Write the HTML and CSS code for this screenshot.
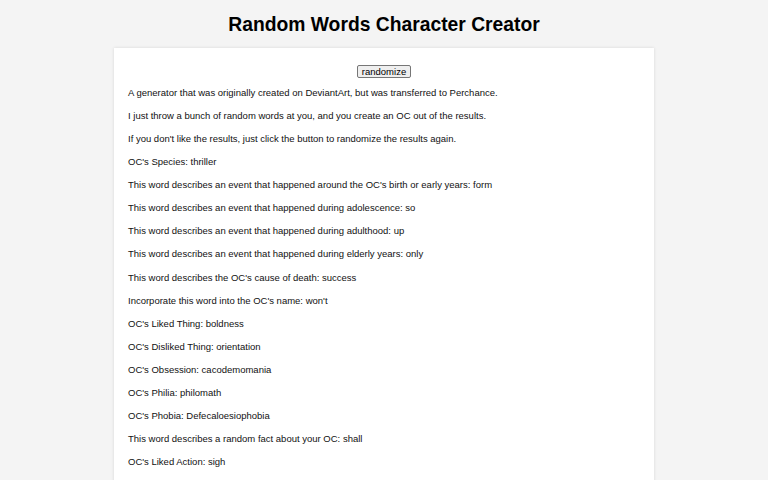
FILE: index.html
```html
<!DOCTYPE html>
<html lang="en">
<head>
<meta charset="utf-8">
<title>Random Words Character Creator</title>
<link rel="stylesheet" href="styles.css">
</head>
<body>
  <h1 class="title">Random Words Character Creator</h1>
  <main class="card">
    <div class="actions">
      <button class="randomize" type="button">randomize</button>
    </div>
    <p>A generator that was originally created on DeviantArt, but was transferred to Perchance.</p>
    <p>I just throw a bunch of random words at you, and you create an OC out of the results.</p>
    <p>If you don't like the results, just click the button to randomize the results again.</p>
    <p>OC's Species: thriller</p>
    <p>This word describes an event that happened around the OC's birth or early years: form</p>
    <p>This word describes an event that happened during adolescence: so</p>
    <p>This word describes an event that happened during adulthood: up</p>
    <p>This word describes an event that happened during elderly years: only</p>
    <p>This word describes the OC's cause of death: success</p>
    <p>Incorporate this word into the OC's name: won't</p>
    <p>OC's Liked Thing: boldness</p>
    <p>OC's Disliked Thing: orientation</p>
    <p>OC's Obsession: cacodemomania</p>
    <p>OC's Philia: philomath</p>
    <p>OC's Phobia: Defecaloesiophobia</p>
    <p>This word describes a random fact about your OC: shall</p>
    <p>OC's Liked Action: sigh</p>
  </main>
</body>
</html>
```
FILE: styles.css
```css
html, body {
  margin: 0;
  padding: 0;
}

body {
  background: #f4f4f4;
  font-family: "Liberation Sans", Arial, sans-serif;
  color: #111;
}

.title {
  margin: 0;
  padding: 13px 0 10px;
  text-align: center;
  font-size: 19.3px;
  line-height: 24px;
  font-weight: bold;
  color: #000;
}

.card {
  width: 512px;
  margin: 1px auto 0;
  padding: 13px 14px 10px;
  background: #fff;
  box-shadow: 0 0 3px rgba(0, 0, 0, 0.12);
}

.actions {
  text-align: center;
  margin-bottom: 7px;
}

.randomize {
  font-family: "Liberation Sans", Arial, sans-serif;
  font-size: 9.5px;
  line-height: 11px;
  padding: 0 4px;
  color: #000;
  background: #efefef;
  border: 1px solid #767676;
  border-radius: 2px;
}

.card p {
  margin: 0 0 10px;
  font-size: 9.5px;
  line-height: 13.06px;
}
```
